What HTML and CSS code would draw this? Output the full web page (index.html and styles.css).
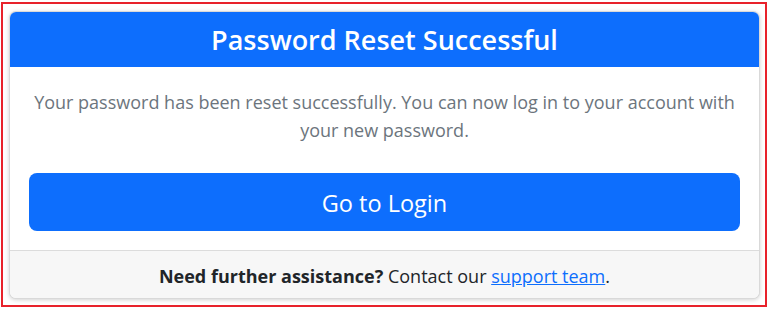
FILE: index.html
```html
<!DOCTYPE html>
<html lang="en">
<head>
  <meta charset="UTF-8" />
  <meta name="viewport" content="width=device-width, initial-scale=1.0"/>
  <title>Password Reset Successful</title>
  <link rel="stylesheet" href="styles.css">
</head>
<body>

<!-- Highlight frame -->
<div class="frame">

  <!-- Reset card -->
  <div class="card">
    <div class="card-header">
      <h3>Password Reset Successful</h3>
    </div>
    <div class="card-body">
      <p>Your password has been reset successfully. You can now log in to your account with your new password.</p>
      <a href="#" class="btn-login">Go to Login</a>
    </div>
    <div class="card-footer">
      <p><strong>Need further assistance?</strong> Contact our <a href="#">support team</a>.</p>
    </div>
  </div>

</div>

</body>
</html>
```

FILE: styles.css
```css
html, body {
  margin: 0; padding: 0;
  background: #fff;
  font-family: "Open Sans", "Noto Sans", sans-serif;
}

body { padding: 2px 1px 0 1px; }

/* Red outline around the card */
.frame {
  border: 2px solid #e8222b;
  padding: 7px 5px 6px 6px;
  height: 305px;
  box-sizing: border-box;
}

.card {
  background: #fff;
  border: 1px solid rgba(0, 0, 0, 0.15);
  border-radius: 7px;
  box-shadow: 0 1px 4px rgba(0, 0, 0, 0.18);
  overflow: hidden;
}

.card-header {
  background: #0d6efd;
  color: #fff;
  text-align: center;
  height: 55px;
  display: flex;
  align-items: center;
  justify-content: center;
}

.card-header h3 {
  margin: 0;
  font-size: 27px;
  font-weight: 600;
}

.card-body {
  padding: 20px 19px 19px 19px;
  text-align: center;
}

.card-body p {
  margin: 0 0 30px 0;
  padding-top: 1px;
  font-size: 18px;
  line-height: 28px;
  color: #6c757d;
  margin-bottom: 29px;
}

.btn-login {
  display: block;
  height: 58px;
  line-height: 60px;
  background: #0d6efd;
  color: #fff;
  border-radius: 8px;
  font-size: 23.5px;
  text-decoration: none;
}

.card-footer {
  background: #f7f7f7;
  border-top: 1px solid #dcdcdc;
  height: 47px;
  display: flex;
  align-items: center;
  justify-content: center;
  font-size: 18px;
  color: #212529;
}

.card-footer p { margin: 0; padding-top: 2px; }
.card-footer strong { font-weight: 700; }
.card-footer a { color: #0d6efd; }
```
